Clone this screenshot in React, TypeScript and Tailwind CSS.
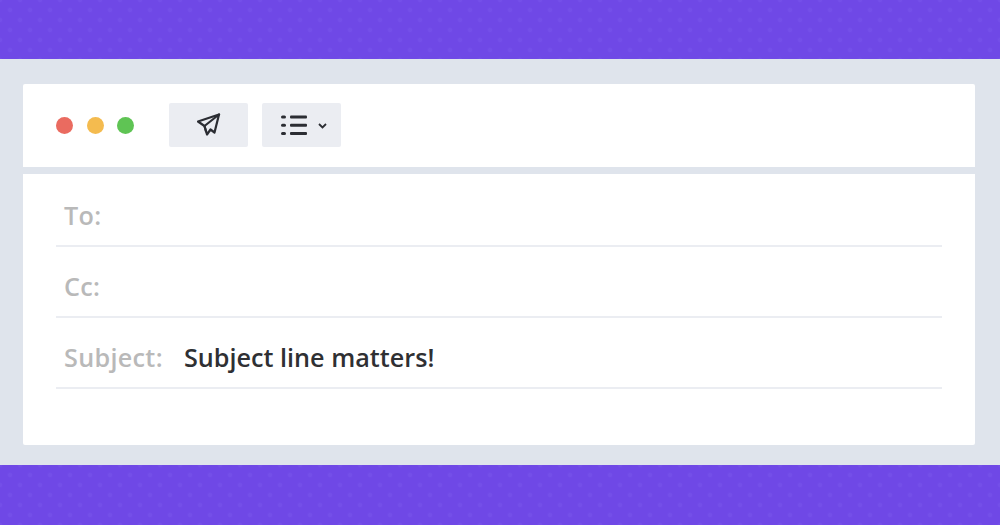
const fieldRows = [
  { label: 'To:', value: '' },
  { label: 'Cc:', value: '' },
  { label: 'Subject:', value: 'Subject line matters!' },
];

function Band({ height }: { height: string }) {
  return (
    <div className={`${height} shrink-0 bg-[#6f48e6] bg-[radial-gradient(circle,#744fe8_1.5px,transparent_3px),radial-gradient(circle,#744fe8_1.5px,transparent_3px)] bg-[length:20px_20px] bg-[position:0_0,10px_10px]`} />
  );
}

function PlaneIcon() {
  return (
    <svg width="24" height="24" viewBox="0 0 24 24" fill="none" stroke="#2b2d33" strokeWidth="2.2" strokeLinejoin="round" strokeLinecap="round">
      <path d="M22 1.5 1 8.5l6.5 4.5 2.5 8.5 3.5-5 4 3z" />
      <path d="M22 1.5 7.5 13l1.5 5.5" />
    </svg>
  );
}

function ListIcon() {
  return (
    <svg width="28" height="22" viewBox="0 0 28 22" fill="#2b2d33">
      <rect x="0" y="1.5" width="5" height="3" rx="1.5" />
      <rect x="0" y="9.8" width="5" height="3" rx="1.5" />
      <rect x="0" y="18" width="5" height="3" rx="1.5" />
      <rect x="9" y="1.5" width="17" height="3" rx="1" />
      <rect x="9" y="9.8" width="17" height="3" rx="1" />
      <rect x="9" y="18" width="17" height="3" rx="1" />
    </svg>
  );
}

export default function App() {
  return (
    <div className="h-[525px] w-[1000px] flex flex-col overflow-hidden bg-[#dfe4ec] font-['Open_Sans',sans-serif]">
      <Band height="h-[59px]" />
      <div className="flex-1 flex flex-col gap-[7px] pl-[23px] pr-[25px] pt-[25px] pb-[20px]">
        <div className="h-[83px] shrink-0 bg-white rounded-t-[2px] flex items-center pl-[33px] pb-[1px]">
          <div className="flex gap-[13.5px]">
            <span className="w-[17px] h-[17px] rounded-full bg-[#ea6b60]" />
            <span className="w-[17px] h-[17px] rounded-full bg-[#f4bb4f]" />
            <span className="w-[17px] h-[17px] rounded-full bg-[#5fc454]" />
          </div>
          <div className="flex gap-[14px] ml-[35px]">
            <button className="w-[79px] h-[44px] bg-[#ebedf2] rounded-[2px] flex items-center justify-center">
              <PlaneIcon />
            </button>
            <button className="w-[79px] h-[44px] bg-[#ebedf2] rounded-[2px] flex items-center pl-[19px]">
              <ListIcon />
              <svg className="ml-[9px] mt-[1px]" width="9" height="6" viewBox="0 0 9 6" fill="none" stroke="#2b2d33" strokeWidth="1.8">
                <path d="M1 1l3.5 3.5L8 1" />
              </svg>
            </button>
          </div>
        </div>
        <div className="flex-1 bg-white rounded-b-[2px] px-[33px] pt-[2px]">
          {fieldRows.map((row) => (
            <div key={row.label} className="h-[71px] pt-[11px] pl-[8px] flex items-center border-b-2 border-[#ebedf2] text-[25.2px] leading-none">
              <span className="w-[120px] font-semibold tracking-[0.3px] text-[#b9b9b9]">{row.label}</span>
              {row.value && <span className="font-semibold text-[#2f3033]">{row.value}</span>}
            </div>
          ))}
        </div>
      </div>
      <Band height="h-[60px]" />
    </div>
  );
}
